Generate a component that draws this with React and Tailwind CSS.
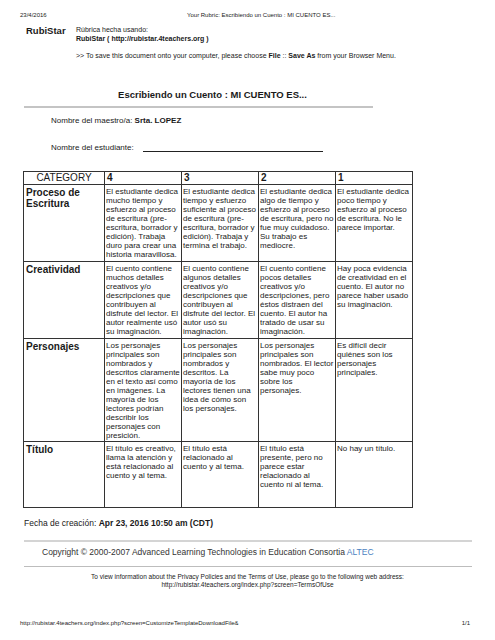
import React from "react";

const rows = [
  {
    cat: ["Proceso de", "Escritura"],
    h: "h-[77px]",
    cells: [
      "El estudiante dedica mucho tiempo y esfuerzo al proceso de escritura (pre-escritura, borrador y edición). Trabaja duro para crear una historia maravillosa.",
      "El estudiante dedica tiempo y esfuerzo suficiente al proceso de escritura (pre-escritura, borrador y edición). Trabaja y termina el trabajo.",
      "El estudiante dedica algo de tiempo y esfuerzo al proceso de escritura, pero no fue muy cuidadoso. Su trabajo es mediocre.",
      "El estudiante dedica poco tiempo y esfuerzo al proceso de escritura. No le parece importar.",
    ],
  },
  {
    cat: ["Creatividad"],
    h: "h-[77px]",
    cells: [
      "El cuento contiene muchos detalles creativos y/o descripciones que contribuyen al disfrute del lector. El autor realmente usó su imaginación.",
      "El cuento contiene algunos detalles creativos y/o descripciones que contribuyen al disfrute del lector. El autor usó su imaginación.",
      "El cuento contiene pocos detalles creativos y/o descripciones, pero éstos distraen del cuento. El autor ha tratado de usar su imaginación.",
      "Hay poca evidencia de creatividad en el cuento. El autor no parece haber usado su imaginación.",
    ],
  },
  {
    cat: ["Personajes"],
    h: "h-[103px]",
    cells: [
      "Los personajes principales son nombrados y descritos claramente en el texto así como en imágenes. La mayoría de los lectores podrían describir los personajes con presición.",
      "Los personajes principales son nombrados y descritos. La mayoría de los lectores tienen una idea de cómo son los personajes.",
      "Los personajes principales son nombrados. El lector sabe muy poco sobre los personajes.",
      "Es difícil decir quiénes son los personajes principales.",
    ],
  },
  {
    cat: ["Título"],
    h: "h-[66px]",
    cells: [
      "El título es creativo, llama la atención y está relacionado al cuento y al tema.",
      "El título está relacionado al cuento y al tema.",
      "El título está presente, pero no parece estar relacionado al cuento ni al tema.",
      "No hay un título.",
    ],
  },
];

export default function App() {
  return (
    <div
      className="w-[495px] h-[640px] bg-white text-[#1a1a1a] overflow-hidden flex flex-col"
      style={{ fontFamily: '"Liberation Sans", Arial, sans-serif' }}
    >
      {/* print header */}
      <div className="flex pt-[11px] pl-[20px] text-[6px] leading-[8px] text-[#222]">
        <span className="w-[167px]">23/4/2016</span>
        <span>Your Rubric: Escribiendo un Cuento : MI CUENTO ES...</span>
      </div>

      {/* RubiStar block */}
      <div className="flex mt-[6px] pl-[26px]">
        <div className="w-[50px] text-[9.5px] leading-[12px] font-bold">RubiStar</div>
        <div className="flex flex-col text-[7px]">
          <span className="leading-[9px]">Rúbrica hecha usando:</span>
          <span className="leading-[9px] font-bold">RubiStar ( http://rubistar.4teachers.org )</span>
          <span className="mt-[8px] leading-[9px]">
            &gt;&gt; To save this document onto your computer, please choose <b>File</b> :: <b>Save As</b> from your Browser Menu.
          </span>
        </div>
      </div>

      {/* title */}
      <div className="mt-[29px] w-[349px] ml-[38px] text-center text-[9.5px] leading-[12px] font-bold">
        Escribiendo un Cuento : MI CUENTO ES...
      </div>
      <div className="mt-[5px] ml-[24px] w-[349px] h-[2px] bg-[#c4c4c4]" />

      <div className="mt-[8px] ml-[51px] text-[8px] leading-[10px]">
        Nombre del maestro/a: <b>Srta. LOPEZ</b>
      </div>
      <div className="mt-[17px] ml-[51px] flex items-end text-[8px] leading-[10px]">
        <span>Nombre del estudiante:</span>
        <span className="ml-[9px] w-[180px] border-b border-[#222] mb-[1px]" />
      </div>

      {/* rubric table */}
      <table className="mt-[18px] ml-[23px] border-collapse border-[1.5px] border-[#333] table-fixed w-[389px]">
        <colgroup>
          <col className="w-[81px]" />
          <col className="w-[77px]" />
          <col className="w-[77px]" />
          <col className="w-[77px]" />
          <col className="w-[77px]" />
        </colgroup>
        <thead>
          <tr className="h-[13px]">
            <th className="border border-[#333] text-center font-normal text-[10px] leading-[12px] p-0">CATEGORY</th>
            {["4", "3", "2", "1"].map((n) => (
              <th key={n} className="border border-[#333] text-left font-bold text-[10px] leading-[12px] px-[2px] py-0">
                {n}
              </th>
            ))}
          </tr>
        </thead>
        <tbody>
          {rows.map((r, i) => (
            <tr key={i} className={r.h}>
              <td className="border border-[#333] align-top px-[2px] pt-[2px] font-bold text-[10px] leading-[11px]">
                {r.cat.map((c, j) => (
                  <div key={j}>{c}</div>
                ))}
              </td>
              {r.cells.map((c, j) => (
                <td key={j} className="border border-[#333] align-top pl-[1px] pr-0 pt-[2px] text-[8px] leading-[9px] text-[#222]">
                  {c}
                </td>
              ))}
            </tr>
          ))}
        </tbody>
      </table>

      <div className="mt-[10px] ml-[24px] text-[8.5px] leading-[11px]">
        Fecha de creación: <b>Apr 23, 2016 10:50 am (CDT)</b>
      </div>
      <div className="mt-[11px] ml-[24px] w-[448px] h-[2px] bg-[#d4d4d4]" />
      <div className="mt-[5px] ml-[42px] text-[8.5px] leading-[11px] text-[#333]">
        Copyright © 2000-2007 Advanced Learning Technologies in Education Consortia{" "}
        <span className="text-[#4a7fc1]">ALTEC</span>
      </div>
      <div className="mt-[8px] ml-[24px] w-[448px] h-px bg-[#bdbdbd]" />
      <div className="mt-[6px] w-[495px] text-center text-[6.5px] leading-[8px]">
        <div>To view information about the Privacy Policies and the Terms of Use, please go to the following web address:</div>
        <div>http://rubistar.4teachers.org/index.php?screen=TermsOfUse</div>
      </div>

      <div className="mt-auto pb-[13px] flex justify-between pl-[20px] pr-[25px] text-[6px] leading-[8px] text-[#222]">
        <span>http://rubistar.4teachers.org/index.php?screen=CustomizeTemplateDownloadFile&amp;</span>
        <span>1/1</span>
      </div>
    </div>
  );
}
